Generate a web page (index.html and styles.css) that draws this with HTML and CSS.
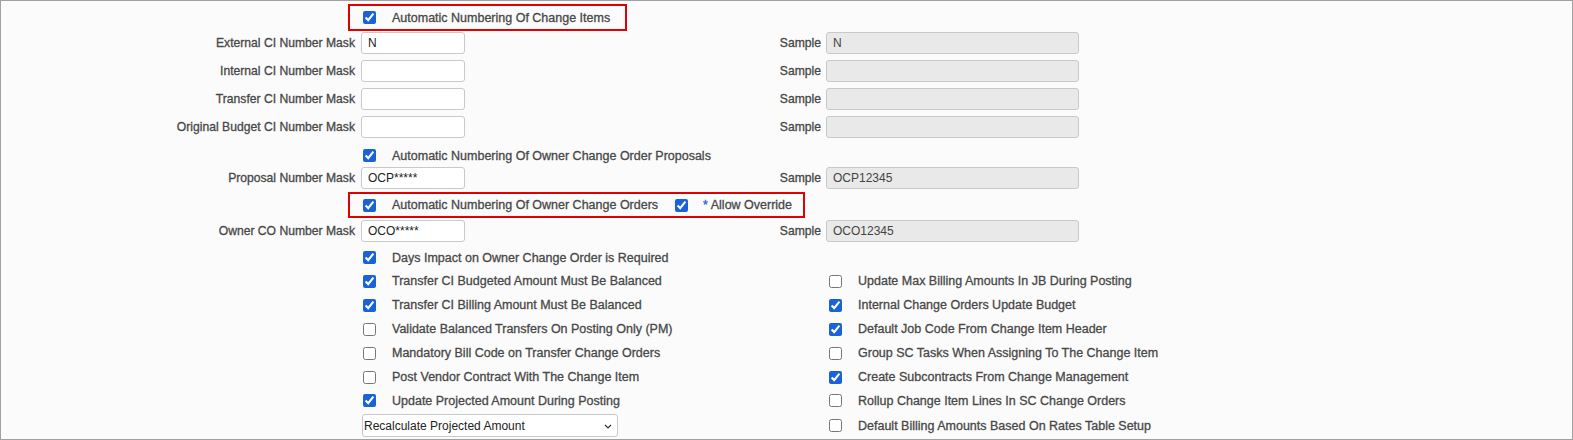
FILE: index.html
```html
<!DOCTYPE html>
<html>
<head>
<meta charset="utf-8">
<link rel="stylesheet" href="styles.css">
</head>
<body>
<div class="panel">
  <div class="row r-top">
    <div class="redbox rb1">
      <label class="cb"><input type="checkbox" checked><span>Automatic Numbering Of Change Items</span></label>
    </div>
  </div>

  <div class="field">
    <span class="lbl">External CI Number Mask</span>
    <input class="txt" type="text" value="N">
    <span class="slbl">Sample</span>
    <input class="txt sample" type="text" value="N" readonly>
  </div>
  <div class="field">
    <span class="lbl">Internal CI Number Mask</span>
    <input class="txt" type="text" value="">
    <span class="slbl">Sample</span>
    <input class="txt sample" type="text" value="" readonly>
  </div>
  <div class="field">
    <span class="lbl">Transfer CI Number Mask</span>
    <input class="txt" type="text" value="">
    <span class="slbl">Sample</span>
    <input class="txt sample" type="text" value="" readonly>
  </div>
  <div class="field">
    <span class="lbl">Original Budget CI Number Mask</span>
    <input class="txt" type="text" value="">
    <span class="slbl">Sample</span>
    <input class="txt sample" type="text" value="" readonly>
  </div>

  <div class="row r-cb2">
    <label class="cb"><input type="checkbox" checked><span>Automatic Numbering Of Owner Change Order Proposals</span></label>
  </div>

  <div class="field f-prop">
    <span class="lbl">Proposal Number Mask</span>
    <input class="txt" type="text" value="OCP*****">
    <span class="slbl">Sample</span>
    <input class="txt sample" type="text" value="OCP12345" readonly>
  </div>

  <div class="row r-rb2">
    <div class="redbox rb2">
      <label class="cb"><input type="checkbox" checked><span>Automatic Numbering Of Owner Change Orders</span></label>
      <label class="cb cb-ovr"><input type="checkbox" checked><span><span class="ast">*</span> Allow Override</span></label>
    </div>
  </div>

  <div class="field f-owner">
    <span class="lbl">Owner CO Number Mask</span>
    <input class="txt" type="text" value="OCO*****">
    <span class="slbl">Sample</span>
    <input class="txt sample" type="text" value="OCO12345" readonly>
  </div>

  <div class="opts">
    <label class="cb l"><input type="checkbox" checked><span>Days Impact on Owner Change Order is Required</span></label>
    <div class="empty"></div>

    <label class="cb l"><input type="checkbox" checked><span>Transfer CI Budgeted Amount Must Be Balanced</span></label>
    <label class="cb r"><input type="checkbox"><span>Update Max Billing Amounts In JB During Posting</span></label>

    <label class="cb l"><input type="checkbox" checked><span>Transfer CI Billing Amount Must Be Balanced</span></label>
    <label class="cb r"><input type="checkbox" checked><span>Internal Change Orders Update Budget</span></label>

    <label class="cb l"><input type="checkbox"><span>Validate Balanced Transfers On Posting Only (PM)</span></label>
    <label class="cb r"><input type="checkbox" checked><span>Default Job Code From Change Item Header</span></label>

    <label class="cb l"><input type="checkbox"><span>Mandatory Bill Code on Transfer Change Orders</span></label>
    <label class="cb r"><input type="checkbox"><span>Group SC Tasks When Assigning To The Change Item</span></label>

    <label class="cb l"><input type="checkbox"><span>Post Vendor Contract With The Change Item</span></label>
    <label class="cb r"><input type="checkbox" checked><span>Create Subcontracts From Change Management</span></label>

    <label class="cb l"><input type="checkbox" checked><span>Update Projected Amount During Posting</span></label>
    <label class="cb r"><input type="checkbox"><span>Rollup Change Item Lines In SC Change Orders</span></label>

    <div class="l selcell">
      <select class="sel">
        <option>Recalculate Projected Amount</option>
      </select>
    </div>
    <label class="cb r"><input type="checkbox"><span>Default Billing Amounts Based On Rates Table Setup</span></label>
  </div>
</div>
</body>
</html>
```

FILE: styles.css
```css
* { box-sizing: border-box; }
html, body { margin: 0; padding: 0; background: #fbfbfb; }
body {
  font-family: "Liberation Sans", Arial, sans-serif;
  font-size: 12px;
  color: #484848;
}
.panel {
  width: 1573px;
  height: 440px;
  border: 1px solid #a0a0a0;
  background: #fbfbfb;
  overflow: hidden;
}
.row { display: flex; align-items: flex-start; }
.r-top { height: 31px; padding-left: 347px; padding-top: 3px; }
.r-cb2 { height: 23px; padding-left: 362px; align-items: center; }
.r-rb2 { height: 28px; padding-left: 347px; }

.redbox {
  border: 2px solid #e00000;
  display: flex;
  align-items: center;
  padding-left: 13px;
}
.rb1 { height: 27px; width: 279px; }
.rb2 { height: 26px; width: 457px; }

.cb {
  display: flex;
  align-items: center;
  white-space: nowrap;
  font-size: 12.5px;
  -webkit-text-stroke: 0.3px #484848;
}
.cb input {
  width: 13px;
  height: 13px;
  margin: 0 16px 0 0;
  accent-color: #1a62d8;
  flex: none;
}
.cb-ovr { margin-left: 17px; }
.cb-ovr input { margin-right: 15px; }
.ast { color: #2a5bd0; -webkit-text-stroke-color: #2a5bd0; }

.field {
  display: grid;
  grid-template-columns: 360px 104px 361px 253px;
  height: 28px;
  align-items: start;
}
.f-prop { height: 25px; }
.f-owner { height: 26px; }
.lbl, .slbl {
  text-align: right;
  white-space: nowrap;
  height: 22px;
  line-height: 22px;
  font-size: 12.15px;
  -webkit-text-stroke: 0.3px #484848;
}
.lbl { padding-right: 6px; }
.slbl { padding-right: 5px; }
.txt {
  height: 22px;
  width: 100%;
  border: 1px solid #c9c9c9;
  border-radius: 3px;
  background: #fff;
  font-family: "Liberation Sans", Arial, sans-serif;
  font-size: 12px;
  color: #222;
  padding: 0 6px;
  margin: 0;
  outline: none;
}
.sample { background: #e9e9e9; color: #444; }

.opts {
  display: grid;
  grid-template-columns: 825px 1fr;
  grid-template-rows: 23px 24px 24px 24px 24px 24px 23px 27px;
}
.opts .l { padding-left: 362px; }
.opts .r { padding-left: 3px; }
.opts .cb { height: 100%; }
.opts .selcell { display: flex; align-items: center; padding-left: 361px; }
.sel {
  -webkit-appearance: none;
  appearance: none;
  width: 256px;
  height: 23px;
  border: 1px solid #c9c9c9;
  border-radius: 3px;
  background-color: #fff;
  background-image: url("data:image/svg+xml,%3Csvg xmlns='http://www.w3.org/2000/svg' width='8' height='5' viewBox='0 0 8 5'%3E%3Cpath d='M1 1l3 3 3-3' fill='none' stroke='%23333' stroke-width='1.2'/%3E%3C/svg%3E");
  background-repeat: no-repeat;
  background-position: 241px 9px;
  font-family: "Liberation Sans", Arial, sans-serif;
  font-size: 12px;
  color: #222;
  padding: 0 0 0 1px;
  margin: 0;
}
```
